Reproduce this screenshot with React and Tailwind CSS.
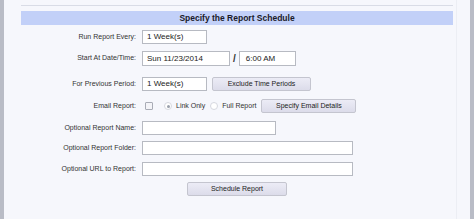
import React from 'react';

const font = { fontFamily: '"Liberation Sans", Arial, sans-serif' };

function Field({ className = '', value = '' }) {
  return (
    <div
      className={`flex h-full items-center border border-[#b7bac2] bg-white px-[4px] text-[8px] text-[#222] ${className}`}
    >
      {value}
    </div>
  );
}

function Btn({ label, className = '' }) {
  return (
    <div
      className={`flex items-center justify-center rounded-[2px] border border-[#c4c5cf] bg-gradient-to-b from-[#ececf6] to-[#dcdcea] text-[7px] text-[#222] ${className}`}
    >
      {label}
    </div>
  );
}

function Row({ label, h, mt, children }) {
  return (
    <div className={`flex items-center ${h} ${mt}`}>
      <div className="w-[133px] shrink-0 pr-[1px] text-right text-[7px] text-[#333]">{label}</div>
      <div className="ml-[5px] flex h-full items-center">{children}</div>
    </div>
  );
}

export default function App() {
  return (
    <div className="flex h-[219px] w-[474px] bg-[#f6f7fc]" style={font}>
      <div className="w-[4px] bg-[#b9bcc6]" />
      <div className="flex-1">
        <div className="ml-[17px] mt-[5px] h-[1px] w-[432px] bg-[#d9dce6]" />
        <div className="ml-[17px] mt-[5px] flex h-[14px] w-[432px] items-center justify-center bg-[#c2d0f8] text-[8.5px] font-bold text-[#1a1a2a]">
          Specify the Report Schedule
        </div>
        <Row label="Run Report Every:" h="h-[14px]" mt="mt-[5px]">
          <Field className="w-[65px]" value="1 Week(s)" />
        </Row>
        <Row label="Start At Date/Time:" h="h-[15px]" mt="mt-[7px]">
          <Field className="w-[88px]" value="Sun  11/23/2014" />
          <span className="mx-[3px] text-[10px] font-bold text-[#333]">/</span>
          <Field className="w-[57px] pl-[6px]" value="6:00 AM" />
        </Row>
        <Row label="For Previous Period:" h="h-[14px]" mt="mt-[11px]">
          <Field className="w-[65px]" value="1 Week(s)" />
          <Btn label="Exclude Time Periods" className="ml-[5px] h-[14px] w-[99px]" />
        </Row>
        <Row label="Email Report:" h="h-[14px]" mt="mt-[8px]">
          <div className="ml-[3px] h-[8px] w-[8px] rounded-[1px] border border-[#a9acb6] bg-[#f4f4f8]" />
          <div className="ml-[11px] flex h-[8px] w-[8px] items-center justify-center rounded-full border border-[#d6d8e0] bg-white">
            <div className="h-[3px] w-[3px] rounded-full bg-[#9aa0ac]" />
          </div>
          <span className="ml-[4px] text-[7px] text-[#333]">Link Only</span>
          <div className="ml-[5px] h-[8px] w-[8px] rounded-full border border-[#d6d8e0] bg-white" />
          <span className="ml-[4px] text-[7px] text-[#333]">Full Report</span>
          <Btn label="Specify Email Details" className="ml-[5px] h-[14px] w-[95px]" />
        </Row>
        <Row label="Optional Report Name:" h="h-[14px]" mt="mt-[8px]">
          <Field className="w-[134px]" />
        </Row>
        <Row label="Optional Report Folder:" h="h-[14px]" mt="mt-[6px]">
          <Field className="w-[211px]" />
        </Row>
        <Row label="Optional URL to Report:" h="h-[14px]" mt="mt-[7px]">
          <Field className="w-[211px]" />
        </Row>
        <div className="mt-[6px] flex">
          <Btn label="Schedule Report" className="ml-[183px] h-[14px] w-[100px]" />
        </div>
      </div>
      <div className="w-[1px] bg-[#eceef4]" />
      <div className="ml-[13px] w-[4px] bg-[#b9bcc6]" />
    </div>
  );
}
